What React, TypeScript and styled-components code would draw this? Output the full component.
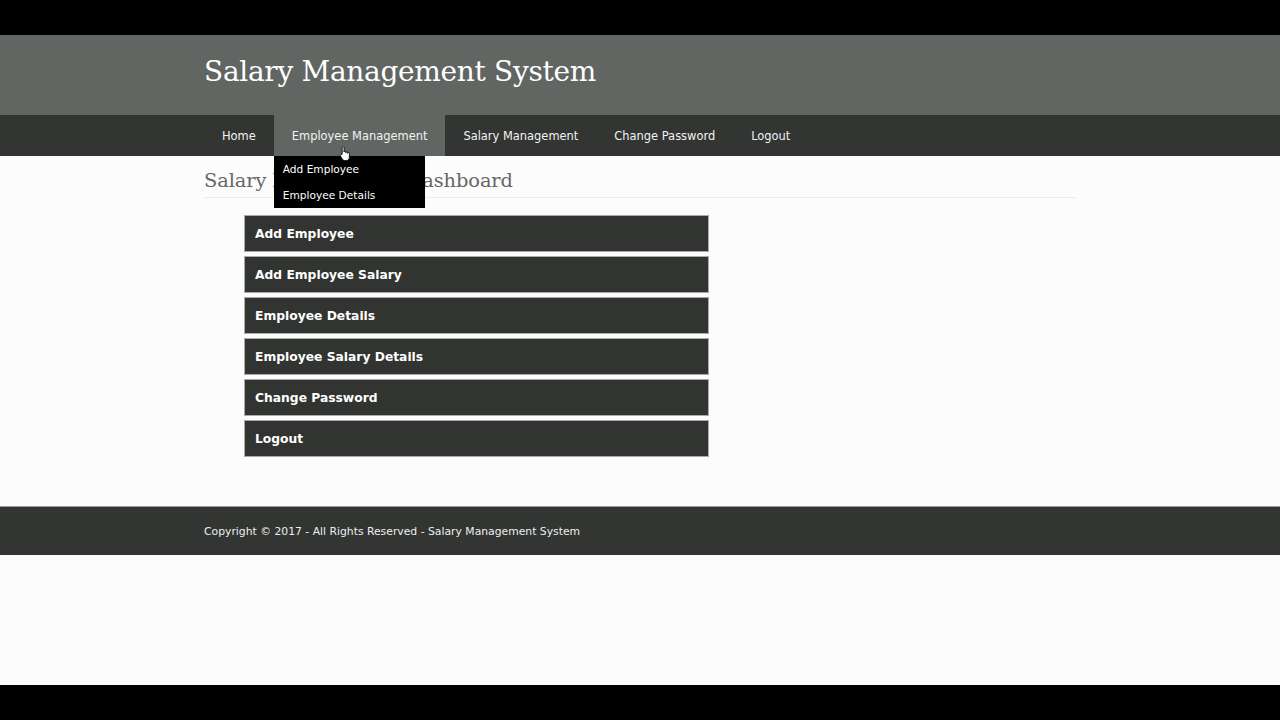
import * as React from 'react'
import styled, { createGlobalStyle } from 'styled-components'

const GlobalStyle = createGlobalStyle`
  html, body {
    margin: 0;
    padding: 0;
    background: #000;
  }
  body {
    font-family: "DejaVu Sans", Verdana, sans-serif;
  }
`

/**
 * Page component (the visible browser area between the black bars).
 */
const Page = styled.div`
  margin: 35px 0;
  height: 650px;
  background: #fbfcfb;
  overflow: hidden;
  display: flex;
  flex-direction: column;
`

/**
 * Container component.
 */
const Container = styled.div`
  width: 872px;
  margin: 0 auto;
`

/**
 * Header component.
 */
const Header = styled.header`
  box-sizing: border-box;
  height: 80px;
  padding-bottom: 8px;
  background: #626663;
  display: flex;
  align-items: center;
`

/**
 * Title component.
 */
const Title = styled.h1`
  margin: 0;
  color: #fff;
  font-family: "DejaVu Serif", Georgia, serif;
  font-size: 28px;
  font-weight: normal;
  letter-spacing: -0.3px;
`

/**
 * Nav component.
 */
const Nav = styled.nav`
  height: 41px;
  background: #333533;
`

/**
 * Menu component.
 */
const Menu = styled.ul`
  display: flex;
  margin: 0;
  padding: 0;
  list-style: none;
  height: 41px;
`

/**
 * MenuItem component.
 */
const MenuItem = styled.li<{ $active?: boolean }>`
  position: relative;
  display: flex;
  align-items: center;
  padding: 1px 18px 0 18px;
  color: #f2f2f2;
  font-size: 11.45px;
  background: ${(p) => (p.$active ? '#626663' : 'transparent')};
`

/**
 * Dropdown component.
 */
const Dropdown = styled.ul`
  position: absolute;
  top: 41px;
  left: 0;
  width: 151px;
  margin: 0;
  padding: 0;
  list-style: none;
  background: #000;
  z-index: 5;
`

/**
 * DropdownItem component.
 */
const DropdownItem = styled.li`
  height: 26px;
  line-height: 27px;
  padding-left: 9px;
  color: #fff;
  font-size: 10.6px;
  white-space: nowrap;
`

/**
 * Cursor component.
 */
const Cursor = styled.svg`
  position: absolute;
  top: 31px;
  left: 65px;
  z-index: 6;
`

/**
 * Content component.
 */
const Content = styled.main`
  padding-top: 13px;
  height: 337px;
`

/**
 * Heading component.
 */
const Heading = styled.h2`
  margin: 0;
  padding-bottom: 5px;
  color: #666;
  font-family: "DejaVu Serif", Georgia, serif;
  font-size: 19.4px;
  font-weight: normal;
  letter-spacing: -0.1px;
  border-bottom: 1px solid #eceeec;
`

/**
 * ActionList component.
 */
const ActionList = styled.div`
  display: flex;
  flex-direction: column;
  gap: 4px;
  margin: 17px 0 0 40px;
  width: 465px;
`

/**
 * ActionButton component.
 */
const ActionButton = styled.div`
  box-sizing: border-box;
  height: 37px;
  display: flex;
  align-items: center;
  padding: 1px 0 0 10px;
  background: #313431;
  border: 1px solid #a9aba9;
  color: #fff;
  font-size: 12.3px;
  font-weight: bold;
`

/**
 * Footer component.
 */
const Footer = styled.footer`
  box-sizing: border-box;
  height: 49px;
  background: #333533;
  border-top: 1px solid #9a9c9a;
  display: flex;
  align-items: center;
`

/**
 * FooterText component.
 */
const FooterText = styled.p`
  margin: 0;
  color: #eee;
  font-size: 10.8px;
`

const navItems = ['Home', 'Employee Management', 'Salary Management', 'Change Password', 'Logout']

const actions = [
  'Add Employee',
  'Add Employee Salary',
  'Employee Details',
  'Employee Salary Details',
  'Change Password',
  'Logout',
]

/**
 * App Component.
 */
export default function App() {
  return (
    <>
      <GlobalStyle />
      <Page>
        <Header>
          <Container>
            <Title>Salary Management System</Title>
          </Container>
        </Header>
        <Nav>
          <Container>
            <Menu>
              {navItems.map((item) => (
                <MenuItem key={item} $active={item === 'Employee Management'}>
                  {item}
                  {item === 'Employee Management' && (
                    <>
                      <Dropdown>
                        <DropdownItem>Add Employee</DropdownItem>
                        <DropdownItem>Employee Details</DropdownItem>
                      </Dropdown>
                      <Cursor width="13" height="16" viewBox="0 0 13 16">
                        <path
                          d="M3.2 8V1.5a0.9 0.9 0 0 1 1.8 0V6a0.9 0.9 0 0 1 1.8 0v0.8a0.9 0.9 0 0 1 1.8 0v0.6a0.9 0.9 0 0 1 1.8 0V11c0 2-1.2 3.5-3 3.5H5.8c-1.1 0-1.9-.6-2.5-1.5L1.3 9.8c-.4-.7.4-1.3 1-.8z"
                          fill="#fff"
                          stroke="#000"
                          strokeWidth="0.8"
                          strokeLinejoin="round"
                        />
                      </Cursor>
                    </>
                  )}
                </MenuItem>
              ))}
            </Menu>
          </Container>
        </Nav>
        <Content>
          <Container>
            <Heading>Salary Management Dashboard</Heading>
            <ActionList>
              {actions.map((action) => (
                <ActionButton key={action}>{action}</ActionButton>
              ))}
            </ActionList>
          </Container>
        </Content>
        <Footer>
          <Container>
            <FooterText>Copyright © 2017 - All Rights Reserved - Salary Management System</FooterText>
          </Container>
        </Footer>
      </Page>
    </>
  )
}
